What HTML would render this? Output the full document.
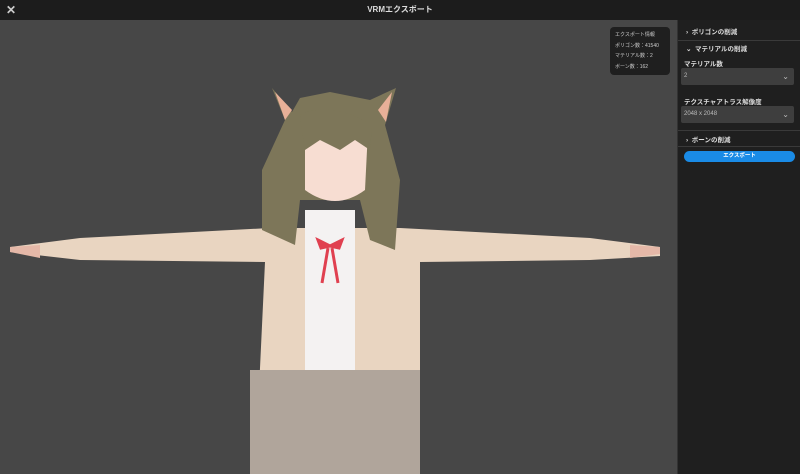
<!DOCTYPE html>
<html><head><meta charset="utf-8"><style>
body{margin:0;width:800px;height:474px;overflow:hidden;background:#474747;font-family:"Liberation Sans","Noto Sans CJK JP",sans-serif;position:relative}
.hdr{position:absolute;left:0;top:0;width:800px;height:20px;background:#1c1c1c;color:#ddd;font-size:8px;font-weight:bold;text-align:center;line-height:20px}
.x{position:absolute;left:6px;top:0;color:#ccc;font-size:12px}
.side{position:absolute;left:677px;top:20px;width:123px;height:454px;background:#1f1f1f;border-left:1px solid #333;color:#ddd;font-size:6.5px;font-weight:bold}
.side div{position:absolute;white-space:nowrap}
.ln{left:0;width:123px;height:1px;background:#3a3a3a}
.sel{left:3px;width:113px;height:17px;background:#3e3e3e;border-radius:2px;color:#bbb;font-weight:normal;font-size:6px;line-height:17px;padding-left:3px;box-sizing:border-box}
.chev{position:absolute;right:5px;top:0;font-size:8px}
.btn{left:6px;top:131px;width:111px;height:11px;border-radius:6px;background:#1a8be6;color:#fff;font-size:5.5px;text-align:center;line-height:11px}
.info{position:absolute;left:610px;top:27px;width:60px;height:48px;background:#1f1f1f;border-radius:4px;color:#ccc;font-size:5px;line-height:10.5px;padding:3px 5px;box-sizing:border-box;white-space:nowrap}
</style></head><body>
<svg width="800" height="474" style="position:absolute;left:0;top:0">
<path d="M10 247 L80 238 L270 228 L400 228 L590 238 L660 247 L660 256 L590 260 L420 262 L420 474 L255 474 L265 262 L80 260 L10 252Z" fill="#e9d5c1"/>
<path d="M10 247 L40 245 L40 258 L10 252Z M630 245 L660 247 L660 254 L630 258Z" fill="#e5b8a8"/>
<rect x="250" y="370" width="170" height="104" fill="#b0a59b"/>
<rect x="305" y="210" width="50" height="160" fill="#f4f2f2"/>
<path d="M318 240 l12 6 l12 -6 l-3 8 l-9 -2 l-9 2z M328 248 l-6 35 M332 248 l6 35" stroke="#e04050" stroke-width="3" fill="#e04050"/>
<path d="M272 88 L292 112 L300 98 L330 92 L370 100 L396 88 L385 125 L400 180 L395 250 L370 240 L360 200 L300 200 L295 245 L262 230 L262 170 L285 120Z" fill="#7d7659"/>
<path d="M275 92 L292 110 L285 120Z M392 92 L378 110 L386 122Z" fill="#e8b098"/>
<path d="M305 125 Q330 110 368 130 L365 190 Q335 212 305 190Z" fill="#f7ddd2"/>
<path d="M300 115 Q330 100 372 125 L370 150 L355 140 L340 150 L320 140 L305 150Z" fill="#7d7659"/>
</svg>
<div class="hdr"><span class="x">✕</span>VRMエクスポート</div>
<div class="info">エクスポート情報<br>ポリゴン数：41540<br>マテリアル数：2<br>ボーン数：162</div>
<div class="side">
<div style="left:8px;top:6px">›&nbsp; ポリゴンの削減</div>
<div class="ln" style="top:20px"></div>
<div style="left:8px;top:23px">⌄&nbsp; マテリアルの削減</div>
<div style="left:6px;top:38px">マテリアル数</div>
<div class="sel" style="top:48px">2<span class="chev">⌄</span></div>
<div style="left:6px;top:76px">テクスチャアトラス解像度</div>
<div class="sel" style="top:86px">2048 x 2048<span class="chev">⌄</span></div>
<div class="ln" style="top:110px"></div>
<div style="left:8px;top:114px">›&nbsp; ボーンの削減</div>
<div class="ln" style="top:126px"></div>
<div class="btn">エクスポート</div>
</div>
</body></html>
